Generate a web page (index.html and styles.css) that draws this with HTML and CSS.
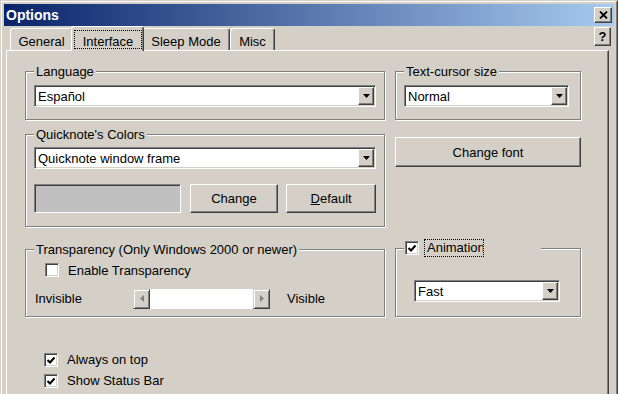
FILE: index.html
```html
<!DOCTYPE html>
<html lang="en">
<head>
    <meta charset="UTF-8">
    <meta name="viewport" content="width=device-width, initial-scale=1.0">
    <title>Options</title>
    <link rel="stylesheet" href="styles.css">
</head>
<body>
    <div class="window">
        <div class="frame">
            <div class="titlebar">
                <span class="title">Options</span>
                <button type="button" class="btn close-btn" aria-label="Close">
                    <svg width="9" height="8" viewBox="0 0 9 8"><path d="M1 0.5 L8 7.5 M8 0.5 L1 7.5" stroke="#000" stroke-width="1.8"/></svg>
                </button>
            </div>

            <div class="tabrow">
                <div class="tab tab-general">General</div>
                <div class="tab tab-interface active"><span class="focus">Interface</span></div>
                <div class="tab tab-sleep">Sleep Mode</div>
                <div class="tab tab-misc">Misc</div>
                <button type="button" class="btn help-btn">?</button>
            </div>

            <div class="panel">
                <div class="grid">
                    <fieldset class="group group-lang">
                        <legend>Language</legend>
                        <div class="combo combo-lang">
                            <span class="combo-text">Español</span>
                            <span class="drop"><svg width="7" height="4" viewBox="0 0 7 4"><polygon points="0,0 7,0 3.5,4" fill="#000"/></svg></span>
                        </div>
                    </fieldset>

                    <fieldset class="group group-lang">
                        <legend>Text-cursor size</legend>
                        <div class="combo combo-cursor">
                            <span class="combo-text">Normal</span>
                            <span class="drop"><svg width="7" height="4" viewBox="0 0 7 4"><polygon points="0,0 7,0 3.5,4" fill="#000"/></svg></span>
                        </div>
                    </fieldset>

                    <fieldset class="group group-colors">
                        <legend>Quicknote's Colors</legend>
                        <div class="combo combo-lang">
                            <span class="combo-text">Quicknote window frame</span>
                            <span class="drop"><svg width="7" height="4" viewBox="0 0 7 4"><polygon points="0,0 7,0 3.5,4" fill="#000"/></svg></span>
                        </div>
                        <div class="color-row">
                            <div class="swatch"></div>
                            <button type="button" class="btn push btn-change">Change</button>
                            <button type="button" class="btn push btn-default"><u>D</u>efault</button>
                        </div>
                    </fieldset>

                    <button type="button" class="btn push btn-font">Change font</button>

                    <fieldset class="group group-trans">
                        <legend>Transparency (Only Windows 2000 or newer)</legend>
                        <div class="check check-trans">
                            <span class="box"></span>
                            <span>Enable Transparency</span>
                        </div>
                        <div class="slider-row">
                            <span class="slider-label">Invisible</span>
                            <div class="scroll">
                                <span class="sb-btn"><svg width="4" height="7" viewBox="0 0 4 7"><polygon points="4,0 4,7 0,3.5" fill="#808080"/></svg></span>
                                <span class="sb-track"></span>
                                <span class="sb-btn"><svg width="4" height="7" viewBox="0 0 4 7"><polygon points="0,0 0,7 4,3.5" fill="#808080"/></svg></span>
                            </div>
                            <span class="visible-label">Visible</span>
                        </div>
                    </fieldset>

                    <fieldset class="group group-anim">
                        <legend>
                            <span class="check">
                                <span class="box"><svg width="10" height="10" viewBox="0 0 10 10"><polyline points="1.5,5 4,7.5 8.5,2.5" fill="none" stroke="#000" stroke-width="2"/></svg></span>
                                <span class="focus-label">Animation</span>
                            </span>
                        </legend>
                        <div class="combo combo-anim">
                            <span class="combo-text">Fast</span>
                            <span class="drop"><svg width="7" height="4" viewBox="0 0 7 4"><polygon points="0,0 7,0 3.5,4" fill="#000"/></svg></span>
                        </div>
                    </fieldset>
                </div>

                <div class="options">
                    <div class="check">
                        <span class="box"><svg width="10" height="10" viewBox="0 0 10 10"><polyline points="1.5,5 4,7.5 8.5,2.5" fill="none" stroke="#000" stroke-width="2"/></svg></span>
                        <span>Always on top</span>
                    </div>
                    <div class="check">
                        <span class="box"><svg width="10" height="10" viewBox="0 0 10 10"><polyline points="1.5,5 4,7.5 8.5,2.5" fill="none" stroke="#000" stroke-width="2"/></svg></span>
                        <span>Show Status Bar</span>
                    </div>
                    <div class="check">
                        <span class="box box-grey"></span>
                    </div>
                </div>
            </div>
        </div>
    </div>
</body>
</html>
```

FILE: styles.css
```css
body {
    margin: 0;
    background-color: #d4d0c8;
    font-family: "Liberation Sans", Arial, sans-serif;
    font-size: 13px;
    color: #000;
    overflow: hidden;
}
.window {
    width: 618px;
    height: 420px;
    box-sizing: border-box;
    border: 1px solid;
    border-color: #d4d0c8 #404040 #404040 #d4d0c8;
}
.frame {
    height: 100%;
    box-sizing: border-box;
    border: 1px solid;
    border-color: #fff #808080 #808080 #fff;
    padding: 2px 2px 0;
}
.titlebar {
    height: 22px;
    display: flex;
    align-items: center;
    padding: 0 2px;
    background: linear-gradient(to right, #0a246a, #a6caf0);
}
.title {
    color: #fff;
    font-weight: bold;
    font-size: 14px;
}
.btn {
    font: inherit;
    color: #000;
    background-color: #d4d0c8;
    border: 1px solid;
    border-color: #fff #404040 #404040 #fff;
    box-shadow: inset -1px -1px #808080;
    padding: 0;
    display: flex;
    align-items: center;
    justify-content: center;
}
.close-btn {
    width: 18px;
    height: 16px;
    margin-left: auto;
}
.tabrow {
    height: 24px;
    display: flex;
    align-items: flex-end;
    padding-left: 6px;
}
.tab {
    height: 22px;
    box-sizing: border-box;
    border: 1px solid;
    border-color: #fff #404040 transparent #fff;
    border-bottom: none;
    border-radius: 3px 3px 0 0;
    box-shadow: inset -1px 0 #808080;
    background-color: #d4d0c8;
    text-align: center;
    line-height: 15px;
    padding-top: 5px;
}
.tab-general { width: 63px; }
.tab-interface { width: 73px; }
.tab-sleep { width: 88px; }
.tab-misc { width: 45px; }
.tab.active {
    height: 25px;
    margin: 0 -2px -1px;
    padding: 3px 1px 0 2px;
    position: relative;
    z-index: 1;
}
.tab .focus {
    display: block;
    height: 19px;
    box-sizing: border-box;
    border: 1px dotted #000;
    line-height: 17px;
    padding-top: 2px;
}
.help-btn {
    align-self: flex-start;
    width: 17px;
    height: 19px;
    margin: 1px 3px 0 auto;
    font-weight: bold;
    font-size: 13px;
}
.panel {
    height: 360px;
    margin: 0 5px 0 2px;
    border: 1px solid;
    border-color: #fff #404040 #404040 #fff;
    box-shadow: inset -1px -1px #808080;
    padding: 13px 0 0 18px;
}
.grid {
    display: grid;
    grid-template-columns: 360px 186px;
    column-gap: 10px;
}
.group {
    margin: 0;
    padding: 0 8px;
    min-width: 0;
    border: 1px solid #808080;
    box-shadow: inset 1px 1px #fff, 1px 1px #fff;
}
.group legend {
    padding: 0 2px;
    line-height: 15px;
    background-color: #d4d0c8;
}
.group-lang {
    padding-top: 6px;
    padding-bottom: 12px;
}
.group-colors {
    margin-top: 7px;
    padding-top: 5px;
    padding-bottom: 13px;
}
.group-trans {
    margin-top: 15px;
    padding-top: 5px;
    padding-bottom: 7px;
}
.group-anim {
    margin-top: 12px;
    padding-top: 23px;
}
.group-anim legend {
    width: 137px;
    box-sizing: border-box;
    padding: 0 0 0 1px;
}
.combo {
    height: 22px;
    box-sizing: border-box;
    display: flex;
    align-items: center;
    background-color: #fff;
    border: 1px solid;
    border-color: #808080 #fff #fff #808080;
    box-shadow: inset 1px 1px #404040, inset -1px -1px #d4d0c8;
    padding: 1px 1px 1px 3px;
}
.combo-lang { width: 342px; }
.combo-cursor { width: 165px; }
.combo-anim { width: 146px; margin-left: 10px; }
.combo-text {
    flex: 1;
}
.drop {
    width: 16px;
    height: 18px;
    box-sizing: border-box;
    background-color: #d4d0c8;
    border: 1px solid;
    border-color: #fff #404040 #404040 #fff;
    box-shadow: inset -1px -1px #808080;
    display: flex;
    align-items: center;
    justify-content: center;
}
.color-row {
    display: flex;
    margin-top: 15px;
}
.swatch {
    width: 147px;
    height: 29px;
    box-sizing: border-box;
    background-color: #c0c0c0;
    border: 1px solid;
    border-color: #808080 #fff #fff #808080;
    box-shadow: inset 1px 1px #404040;
}
.push {
    height: 29px;
}
.btn-change {
    width: 89px;
    margin-left: 9px;
}
.btn-default {
    width: 90px;
    margin-left: 8px;
}
.btn-default u {
    text-decoration: underline;
}
.btn-font {
    align-self: start;
    margin-top: 17px;
    height: 30px;
}
.check {
    display: flex;
    align-items: center;
    gap: 9px;
    height: 21px;
}
.box {
    width: 14px;
    height: 14px;
    box-sizing: border-box;
    background-color: #fff;
    border: 1px solid;
    border-color: #808080 #fff #fff #808080;
    box-shadow: inset 1px 1px #404040, inset -1px -1px #d4d0c8;
    display: flex;
    align-items: center;
    justify-content: center;
}
.box-grey {
    background-color: #d4d0c8;
}
.check-trans {
    margin-left: 11px;
    height: 16px;
}
.group-anim .check {
    gap: 5px;
    height: 18px;
}
.focus-label {
    border: 1px dotted #000;
    line-height: 16px;
    width: 56px;
    padding-left: 2px;
    overflow: hidden;
    white-space: nowrap;
}
.slider-row {
    display: flex;
    align-items: center;
    height: 21px;
    margin-top: 10px;
}
.slider-label {
    width: 98px;
    margin-left: 1px;
}
.scroll {
    display: flex;
    width: 137px;
    height: 20px;
}
.sb-btn {
    width: 17px;
    box-sizing: border-box;
    background-color: #d4d0c8;
    border: 1px solid;
    border-color: #d4d0c8 #404040 #404040 #d4d0c8;
    box-shadow: inset 1px 1px #fff, inset -1px -1px #808080;
    display: flex;
    align-items: center;
    justify-content: center;
}
.sb-track {
    flex: 1;
    background-color: #fff;
}
.visible-label {
    margin-left: 17px;
}
.options {
    margin-top: 32px;
    padding-left: 19px;
}
```
